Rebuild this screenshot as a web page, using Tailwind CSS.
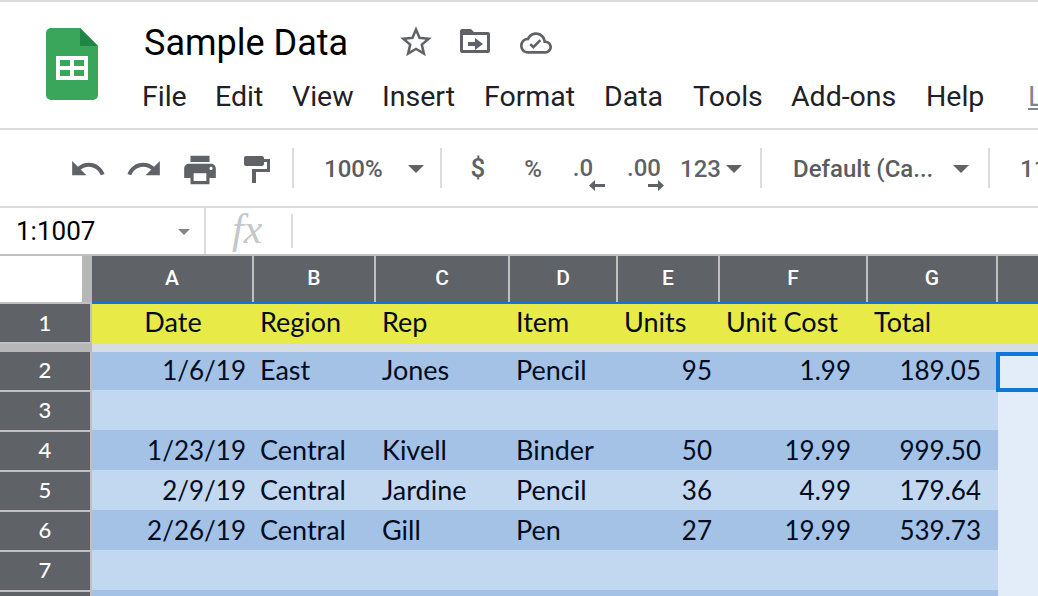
<!DOCTYPE html>
<html lang="en">
<head>
<meta charset="UTF-8">
<title>Sample Data</title>
<script src="https://cdn.jsdelivr.net/npm/@tailwindcss/browser@4"></script>
</head>
<body class="w-[1038px] h-[596px] overflow-hidden bg-white font-['Roboto',sans-serif]">

<!-- title + menu -->
<div class="h-[130px] border-t-2 border-b-2 border-[#dadce0] flex">
  <div class="w-[144px] shrink-0 pl-[46px] pt-[26px]">
    <svg width="52" height="72" viewBox="0 0 52 72">
      <path d="M5 0H34L52 18V67a5 5 0 0 1-5 5H5a5 5 0 0 1-5-5V5a5 5 0 0 1 5-5Z" fill="#3aa65c"/>
      <path d="M34 0L52 18H34Z" fill="#1e8544"/>
      <path d="M10 28H42V52H10Z" fill="#fff"/>
      <path d="M14 32H24V38H14ZM28 32H38V38H28ZM14 42H24V48H14ZM28 42H38V48H28Z" fill="#3aa65c"/>
    </svg>
  </div>
  <div class="flex-1 min-w-0">
    <div class="h-[76px] flex items-center">
      <span class="text-[36px] leading-none text-[#000] w-[253px] pt-[5px] whitespace-nowrap">Sample Data</span>
      <svg class="w-[38px] h-[38px] mt-[4px]" viewBox="0 0 24 24" fill="#5f6368"><path d="M22 9.24l-7.19-.62L12 2 9.19 8.63 2 9.24l5.46 4.73L5.82 21 12 17.27 18.18 21l-1.63-7.03L22 9.24zM12 15.4l-3.76 2.27 1-4.28-3.32-2.88 4.38-.38L12 6.1l1.71 4.04 4.38.38-3.32 2.88 1 4.28L12 15.4z"/></svg>
      <svg class="w-[30px] h-[24px] ml-[25px] mt-[2px]" viewBox="0 0 30 24" fill="#5f6368"><path fill-rule="evenodd" d="M2 0H11L14 3H28a2 2 0 0 1 2 2V22a2 2 0 0 1-2 2H2a2 2 0 0 1-2-2V2a2 2 0 0 1 2-2ZM3 6V21H27V6ZM8 13H15V9L23 15L15 21V17H8Z"/></svg>
      <svg class="w-[32px] h-[32px] ml-[30px] mt-[5px]" viewBox="0 0 24 24" fill="#5f6368"><path d="M19.35 10.04C18.67 6.59 15.64 4 12 4 9.11 4 6.6 5.64 5.35 8.04 2.34 8.36 0 10.91 0 14c0 3.31 2.69 6 6 6h13c2.76 0 5-2.24 5-5 0-2.64-2.05-4.78-4.65-4.96zM19 18H6c-2.21 0-4-1.79-4-4 0-2.05 1.53-3.76 3.56-3.97l1.07-.11.5-.95C8.08 7.14 9.94 6 12 6c2.62 0 4.88 1.86 5.39 4.43l.3 1.5 1.53.11c1.56.1 2.78 1.41 2.78 2.96 0 1.65-1.35 3-3 3zm-9-1.5l-3-3 1.4-1.4 1.6 1.6 4.6-4.6 1.4 1.4-6 6z"/></svg>
    </div>
    <div class="flex items-center text-[28.5px] leading-[36px] text-[#202124] whitespace-nowrap -ml-[2px] mt-[1px] *:shrink-0">
      <span class="w-[73px]">File</span>
      <span class="w-[77px]">Edit</span>
      <span class="w-[90px]">View</span>
      <span class="w-[102px]">Insert</span>
      <span class="w-[120px]">Format</span>
      <span class="w-[89px]">Data</span>
      <span class="w-[98px]">Tools</span>
      <span class="w-[135px]">Add-ons</span>
      <span class="w-[102px]">Help</span>
      <span class="text-[#80868b] underline">L</span>
    </div>
  </div>
</div>

<!-- toolbar -->
<div class="h-[76px] flex items-center pl-[60px] pb-[1px] text-[#5f6368] whitespace-nowrap *:shrink-0">
  <div class="w-[56px] flex justify-center mt-[2px]">
    <svg width="38" height="38" viewBox="0 0 24 24" fill="#5f6368"><path d="M12.5 8c-2.65 0-5.05.99-6.9 2.6L2 7v9h9l-3.62-3.62c1.39-1.16 3.16-1.88 5.12-1.88 3.54 0 6.55 2.31 7.6 5.5l2.37-.78C21.08 11.03 17.15 8 12.5 8z"/></svg>
  </div>
  <div class="w-[56px] flex justify-center mt-[2px]">
    <svg width="38" height="38" viewBox="0 0 24 24" fill="#5f6368"><path d="M18.4 10.6C16.55 8.99 14.15 8 11.5 8c-4.65 0-8.58 3.03-9.96 7.22L3.9 16c1.05-3.19 4.05-5.5 7.6-5.5 1.95 0 3.73.72 5.12 1.88L13 16h9V7l-3.6 3.6z"/></svg>
  </div>
  <div class="w-[56px] flex justify-center mt-[4px]">
    <svg width="38" height="38" viewBox="0 0 24 24" fill="#5f6368"><path d="M19 8H5c-1.66 0-3 1.34-3 3v6h4v4h12v-4h4v-6c0-1.66-1.34-3-3-3zm-3 11H8v-5h8v5zm3-7c-.55 0-1-.45-1-1s.45-1 1-1 1 .45 1 1-.45 1-1 1zm-1-9H6v4h12V3z"/></svg>
  </div>
  <div class="w-[60px] pl-[16px] mt-[4px]">
    <svg width="26" height="27" viewBox="0 0 26 27" fill="#5f6368"><path d="M2 0H18a2 2 0 0 1 2 2V3H26V16H12V27H8V13H23V6H20V8A2 2 0 0 1 18 10H2A2 2 0 0 1 0 8V2A2 2 0 0 1 2 0Z"/></svg>
  </div>
  <div class="w-[2px] h-[40px] bg-[#dadce0] ml-[4px]"></div>
  <span class="text-[24px] font-medium text-[#5a5d60] ml-[30px] w-[84px] mt-[3px]">100%</span>
  <div class="w-0 h-0 border-x-[8px] border-x-transparent border-t-[8px] border-t-[#5f6368] mt-[3px]"></div>
  <div class="w-[2px] h-[40px] bg-[#dadce0] ml-[16px]"></div>
  <span class="text-[26px] font-medium w-[72px] text-center mt-[1px]">$</span>
  <span class="text-[24px] font-medium w-[38px] text-center mt-[2px]">%</span>
  <div class="w-[62px] flex justify-center relative mt-[1px]">
    <span class="text-[24px] font-medium leading-[30px]">.0</span>
    <svg class="absolute top-[27px] left-[37px]" width="16" height="11" viewBox="0 0 16 11" fill="#5f6368"><path d="M0 5.500L6 0V4H16V7H6V11Z"/></svg>
  </div>
  <div class="w-[60px] flex justify-center relative mt-[1px]">
    <span class="text-[24px] font-medium leading-[30px]">.00</span>
    <svg class="absolute top-[27px] left-[34px]" width="16" height="11" viewBox="0 0 16 11" fill="#5f6368"><path d="M16 5.500L10 0V4H0V7H10V11Z"/></svg>
  </div>
  <span class="text-[24px] font-medium ml-[6px] w-[46px] mt-[3px]">123</span>
  <div class="w-0 h-0 border-x-[8px] border-x-transparent border-t-[8px] border-t-[#5f6368] mt-[3px]"></div>
  <div class="w-[2px] h-[40px] bg-[#dadce0] ml-[18px]"></div>
  <span class="text-[24px] font-medium text-[#5a5d60] ml-[31px] w-[160px] mt-[3px]">Default (Ca...</span>
  <div class="w-0 h-0 border-x-[8px] border-x-transparent border-t-[8px] border-t-[#5f6368] mt-[3px]"></div>
  <div class="w-[2px] h-[40px] bg-[#dadce0] ml-[19px]"></div>
  <span class="text-[24px] font-medium ml-[30px] mt-[3px]">11</span>
</div>

<!-- formula bar -->
<div class="h-[50px] border-t-2 border-b-2 border-t-[#dadce0] border-b-[#c0c0c0] flex items-center">
  <span class="text-[26px] text-[#000] w-[178px] pl-[16px]">1:1007</span>
  <div class="w-0 h-0 border-x-[6px] border-x-transparent border-t-[6px] border-t-[#80868b] mt-[2px]"></div>
  <div class="w-[2px] h-full bg-[#dadce0] ml-[15px] -translate-x-px"></div>
  <span class="font-['Liberation_Serif',serif] italic text-[42px] leading-none text-[#c4c7c9] w-[84px] pl-[25px] -mt-[4px]">fx</span>
  <div class="w-[2px] h-[34px] bg-[#dadce0]"></div>
</div>

<!-- sheet -->
<div class="font-['Lato',sans-serif] text-[27px] leading-[40px] text-[#020c1e] whitespace-nowrap">
  <!-- column headers -->
  <div class="grid grid-cols-[82px_10px_162px_122px_134px_108px_102px_148px_130px_1fr] h-[46px] font-['Roboto',sans-serif] text-[21px] font-medium leading-[44px] text-white text-center">
    <div class="bg-white"></div>
    <div class="bg-[#b7b7b7]"></div>
    <div class="bg-[#5f6368] border-r-2 border-[#c0c0c0]">A</div>
    <div class="bg-[#5f6368] border-r-2 border-[#c0c0c0]">B</div>
    <div class="bg-[#5f6368] border-r-2 border-[#c0c0c0]">C</div>
    <div class="bg-[#5f6368] border-r-2 border-[#c0c0c0]">D</div>
    <div class="bg-[#5f6368] border-r-2 border-[#c0c0c0]">E</div>
    <div class="bg-[#5f6368] border-r-2 border-[#c0c0c0]">F</div>
    <div class="bg-[#5f6368] border-r-2 border-[#c0c0c0]">G</div>
    <div class="bg-[#5f6368]"></div>
  </div>

  <!-- row 1 -->
  <div class="grid grid-cols-[90px_2px_162px_122px_134px_108px_102px_148px_130px_1fr] h-[42px] bg-[#c0c0c0]">
    <div class="bg-[#5f6368] text-white text-[22px] font-medium leading-[38px] text-center h-[38px] mt-[2px]">1</div>
    <div class="bg-[#c0c0c0]"></div>
    <div class="col-span-8 grid grid-cols-subgrid border-t-2 border-[#0b78d8] bg-[#e8ea48] h-[42px] leading-[36px]">
      <div class="text-center">Date</div>
      <div class="pl-[6px]">Region</div>
      <div class="pl-[6px]">Rep</div>
      <div class="pl-[6px]">Item</div>
      <div class="pl-[6px]">Units</div>
      <div class="pl-[6px]">Unit Cost</div>
      <div class="pl-[6px]">Total</div>
      <div></div>
    </div>
  </div>
  <!-- freeze bar -->
  <div class="flex h-[8px]">
    <div class="w-[92px] bg-[#b7b7b7]"></div>
    <div class="flex-1 bg-[#d8dde4]"></div>
  </div>

  <!-- row 2 -->
  <div class="grid grid-cols-[90px_2px_162px_122px_134px_108px_102px_148px_130px_1fr] h-[38px] leading-[36px]">
    <div class="bg-[#5f6368] text-white text-[22px] font-medium text-center">2</div>
    <div class="bg-[#c0c0c0]"></div>
    <div class="bg-[#a4c2e6] text-[26px] text-right pr-[8px]">1/6/19</div>
    <div class="bg-[#a4c2e6] pl-[6px]">East</div>
    <div class="bg-[#a4c2e6] pl-[6px]">Jones</div>
    <div class="bg-[#a4c2e6] pl-[6px]">Pencil</div>
    <div class="bg-[#a4c2e6] text-[26px] text-right pr-[8px]">95</div>
    <div class="bg-[#a4c2e6] text-[26px] text-right pr-[17px]">1.99</div>
    <div class="bg-[#a4c2e6] text-[26px] text-right pr-[17px]">189.05</div>
    <div class="bg-[#e2edf9] border-4 border-r-0 border-[#0b78d8] -ml-[2px] h-[40px] relative z-10"></div>
  </div>

  <!-- row 3 -->
  <div class="grid grid-cols-[90px_2px_162px_122px_134px_108px_102px_148px_130px_1fr] h-[40px]">
    <div class="bg-[#5f6368] text-white text-[22px] font-medium text-center border-t-2 border-[#c0c0c0] leading-[36px]">3</div>
    <div class="bg-[#c0c0c0]"></div>
    <div class="col-span-7 bg-[#c2d7f0]"></div>
    <div class="bg-[#e2edf9]"></div>
  </div>

  <!-- row 4 -->
  <div class="grid grid-cols-[90px_2px_162px_122px_134px_108px_102px_148px_130px_1fr] h-[40px]">
    <div class="bg-[#5f6368] text-white text-[22px] font-medium text-center border-t-2 border-[#c0c0c0] leading-[36px]">4</div>
    <div class="bg-[#c0c0c0]"></div>
    <div class="bg-[#a4c2e6] text-[26px] text-right pr-[8px]">1/23/19</div>
    <div class="bg-[#a4c2e6] pl-[6px]">Central</div>
    <div class="bg-[#a4c2e6] pl-[6px]">Kivell</div>
    <div class="bg-[#a4c2e6] pl-[6px]">Binder</div>
    <div class="bg-[#a4c2e6] text-[26px] text-right pr-[8px]">50</div>
    <div class="bg-[#a4c2e6] text-[26px] text-right pr-[17px]">19.99</div>
    <div class="bg-[#a4c2e6] text-[26px] text-right pr-[17px]">999.50</div>
    <div class="bg-[#e2edf9]"></div>
  </div>

  <!-- row 5 -->
  <div class="grid grid-cols-[90px_2px_162px_122px_134px_108px_102px_148px_130px_1fr] h-[40px]">
    <div class="bg-[#5f6368] text-white text-[22px] font-medium text-center border-t-2 border-[#c0c0c0] leading-[36px]">5</div>
    <div class="bg-[#c0c0c0]"></div>
    <div class="bg-[#c2d7f0] text-[26px] text-right pr-[8px]">2/9/19</div>
    <div class="bg-[#c2d7f0] pl-[6px]">Central</div>
    <div class="bg-[#c2d7f0] pl-[6px]">Jardine</div>
    <div class="bg-[#c2d7f0] pl-[6px]">Pencil</div>
    <div class="bg-[#c2d7f0] text-[26px] text-right pr-[8px]">36</div>
    <div class="bg-[#c2d7f0] text-[26px] text-right pr-[17px]">4.99</div>
    <div class="bg-[#c2d7f0] text-[26px] text-right pr-[17px]">179.64</div>
    <div class="bg-[#e2edf9]"></div>
  </div>

  <!-- row 6 -->
  <div class="grid grid-cols-[90px_2px_162px_122px_134px_108px_102px_148px_130px_1fr] h-[40px]">
    <div class="bg-[#5f6368] text-white text-[22px] font-medium text-center border-t-2 border-[#c0c0c0] leading-[36px]">6</div>
    <div class="bg-[#c0c0c0]"></div>
    <div class="bg-[#a4c2e6] text-[26px] text-right pr-[8px]">2/26/19</div>
    <div class="bg-[#a4c2e6] pl-[6px]">Central</div>
    <div class="bg-[#a4c2e6] pl-[6px]">Gill</div>
    <div class="bg-[#a4c2e6] pl-[6px]">Pen</div>
    <div class="bg-[#a4c2e6] text-[26px] text-right pr-[8px]">27</div>
    <div class="bg-[#a4c2e6] text-[26px] text-right pr-[17px]">19.99</div>
    <div class="bg-[#a4c2e6] text-[26px] text-right pr-[17px]">539.73</div>
    <div class="bg-[#e2edf9]"></div>
  </div>

  <!-- row 7 -->
  <div class="grid grid-cols-[90px_2px_162px_122px_134px_108px_102px_148px_130px_1fr] h-[40px]">
    <div class="bg-[#5f6368] text-white text-[22px] font-medium text-center border-t-2 border-[#c0c0c0] leading-[36px]">7</div>
    <div class="bg-[#c0c0c0]"></div>
    <div class="col-span-7 bg-[#c2d7f0]"></div>
    <div class="bg-[#e2edf9]"></div>
  </div>

  <!-- row 8 -->
  <div class="grid grid-cols-[90px_2px_162px_122px_134px_108px_102px_148px_130px_1fr] h-[6px]">
    <div class="bg-[#5f6368] border-t-2 border-[#c0c0c0]"></div>
    <div class="bg-[#c0c0c0]"></div>
    <div class="col-span-7 bg-[#a4c2e6]"></div>
    <div class="bg-[#e2edf9]"></div>
  </div>
</div>
</body>
</html>
